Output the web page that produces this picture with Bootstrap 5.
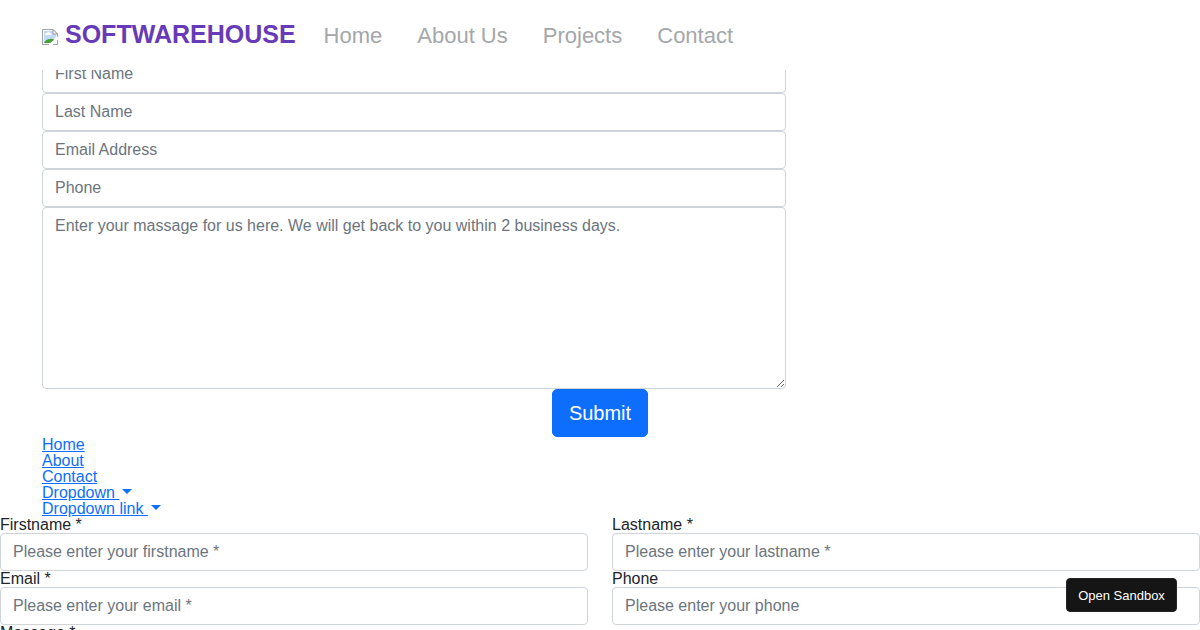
<!DOCTYPE html>
<html lang="en">
<head>
<meta charset="utf-8">
<meta name="viewport" content="width=device-width, initial-scale=1">
<title>Softwarehouse</title>
<link href="https://cdn.jsdelivr.net/npm/bootstrap@5.3.0/dist/css/bootstrap.min.css" rel="stylesheet">
<style>
  body { font-family: "Liberation Sans", Arial, sans-serif; line-height: 1; }
  .site-nav { height: 70px; }
  .site-brand { color: #673ab7; font-size: 25px; font-weight: 700; line-height: 38px; gap: 7px; padding-bottom: 2px; }
  .site-brand:hover { color: #673ab7; }
  .site-brand svg { margin-top: 5px; }
  .site-links { gap: 35px; font-size: 22px; line-height: 33px; margin-left: 28px; }
  .site-links a { color: #a5a7aa; }
  .page-body { padding-top: 55px; }
  .contact-fields { width: 66.6667%; }
  .form-control { border-color: #ced4da; border-radius: 4px; }
  .form-control::placeholder { color: #6c757d; }
  .btn-lg { border-radius: 5px; }
  .dropdown-toggle::after { border-width: 5px 5px 0; vertical-align: 4px; margin-left: 3px; }
  .sandbox-btn { right: 23px; bottom: 18px; width: 111px; height: 34px; z-index: 1040; background: #151515; color: #fff; border: 1px solid #252525; border-radius: 4px; font-size: 13px; }
</style>
</head>
<body class="bg-white">
<nav class="site-nav fixed-top bg-white">
  <div class="container h-100 d-flex align-items-center">
    <a class="site-brand d-flex align-items-center text-decoration-none" href="#">
      <svg width="16" height="16" viewBox="0 0 16 16" aria-hidden="true">
        <path d="M0 0H11L16 5V16H0Z" fill="#fff"/>
        <path d="M2 2H11V5H14V8L8 14H2Z" fill="#c3d9f8"/>
        <path d="M3 6Q3 4 5 4Q6 2 8 4Q10 4 9 6Z" fill="#fff"/>
        <path d="M2 14Q4 10 8 10Q11 9 12 11L8 14Z" fill="#43a52f"/>
        <path d="M0.5 15.5V0.5H11L15.5 5V8M0 15.5H7M11 15.5H15.5V11" fill="none" stroke="#a0a4aa"/>
        <path d="M11 0.5V5H15.5Z" fill="#fff" stroke="#999"/>
        <path d="M7 16L16 7.500V10L10 16Z" fill="#fff"/>
      </svg>
      <span>SOFTWAREHOUSE</span>
    </a>
    <div class="site-links d-flex">
      <a class="text-decoration-none" href="#">Home</a>
      <a class="text-decoration-none" href="#">About Us</a>
      <a class="text-decoration-none" href="#">Projects</a>
      <a class="text-decoration-none" href="#contact">Contact</a>
    </div>
  </div>
</nav>

<div class="page-body vh-100 overflow-hidden">
  <main class="container">
    <form id="contact">
      <div class="contact-fields">
        <input class="form-control" type="text" placeholder="First Name" aria-label="First Name">
        <input class="form-control" type="text" placeholder="Last Name" aria-label="Last Name">
        <input class="form-control" type="email" placeholder="Email Address" aria-label="Email Address">
        <input class="form-control" type="tel" placeholder="Phone" aria-label="Phone">
        <textarea class="form-control d-block" rows="7" placeholder="Enter your massage for us here. We will get back to you within 2 business days." aria-label="Message"></textarea>
      </div>
      <div class="d-flex justify-content-center">
        <button class="btn btn-primary btn-lg" type="submit">Submit</button>
      </div>
    </form>
    <ul class="list-unstyled mb-0">
      <li><a href="#">Home</a></li>
      <li><a href="#">About</a></li>
      <li><a href="#">Contact</a></li>
      <li><a class="dropdown-toggle" href="#" data-bs-toggle="dropdown">Dropdown&nbsp;</a></li>
      <li><a class="dropdown-toggle" href="#" data-bs-toggle="dropdown">Dropdown link&nbsp;</a></li>
    </ul>
  </main>
  <form class="row">
    <div class="col-6">
      <label class="d-block" for="firstname">Firstname *</label>
      <input class="form-control" id="firstname" type="text" placeholder="Please enter your firstname *">
    </div>
    <div class="col-6">
      <label class="d-block" for="lastname">Lastname *</label>
      <input class="form-control" id="lastname" type="text" placeholder="Please enter your lastname *">
    </div>
    <div class="col-6">
      <label class="d-block" for="email">Email *</label>
      <input class="form-control" id="email" type="email" placeholder="Please enter your email *">
    </div>
    <div class="col-6">
      <label class="d-block" for="phone">Phone</label>
      <input class="form-control" id="phone" type="tel" placeholder="Please enter your phone">
    </div>
    <div class="col-12">
      <label class="d-block" for="message">Message *</label>
      <textarea class="form-control" id="message" rows="4"></textarea>
    </div>
  </form>
</div>

<button class="sandbox-btn position-fixed p-0" type="button">Open Sandbox</button>
<script src="https://cdn.jsdelivr.net/npm/bootstrap@5.3.0/dist/js/bootstrap.bundle.min.js"></script>
</body>
</html>
